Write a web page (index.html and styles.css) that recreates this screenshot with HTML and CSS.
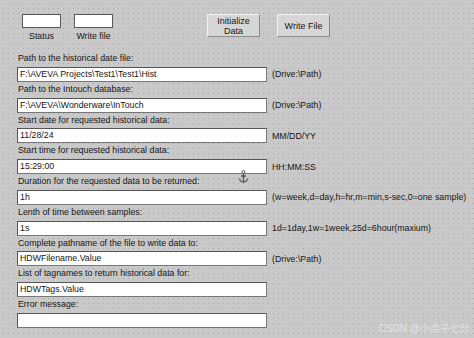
FILE: index.html
```html
<!DOCTYPE html>
<html lang="en">

<head>
    <meta charset="UTF-8">
    <meta name="viewport" content="width=device-width, initial-scale=1.0">
    <title>Historical Data</title>
    <link rel="stylesheet" href="styles.css">
</head>

<body>
    <!-- 顶部状态与按钮 -->
    <div class="top">
        <div class="flag">
            <div class="flag_box"></div>
            <span>Status</span>
        </div>
        <div class="flag">
            <div class="flag_box"></div>
            <span>Write file</span>
        </div>
        <button class="btn btn_init">Initialize<br>Data</button>
        <button class="btn">Write File</button>
    </div>
    <!-- 表单 -->
    <div class="form">
        <div class="label">Path to the historical date file:</div>
        <div class="row">
            <div class="field">F:\AVEVA Projects\Test1\Test1\Hist</div>
            <span class="hint">(Drive:\Path)</span>
        </div>
        <div class="label">Path to the Intouch database:</div>
        <div class="row">
            <div class="field">F:\AVEVA\Wonderware\InTouch</div>
            <span class="hint">(Drive:\Path)</span>
        </div>
        <div class="label">Start date for requested historical data:</div>
        <div class="row">
            <div class="field">11/28/24</div>
            <span class="hint">MM/DD/YY</span>
        </div>
        <div class="label">Start time for requested historical data:</div>
        <div class="row">
            <div class="field">15:29:00</div>
            <span class="hint">HH:MM:SS</span>
        </div>
        <div class="label">Duration for the requested data to be returned:</div>
        <div class="row">
            <div class="field">1h</div>
            <span class="hint">(w=week,d=day,h=hr,m=min,s-sec,0=one sample)</span>
        </div>
        <div class="label">Lenth of time between samples:</div>
        <div class="row">
            <div class="field">1s</div>
            <span class="hint">1d=1day,1w=1week,25d=6hour(maxium)</span>
        </div>
        <div class="label">Complete pathname of the file to write data to:</div>
        <div class="row">
            <div class="field">HDWFilename.Value</div>
            <span class="hint">(Drive:\Path)</span>
        </div>
        <div class="label">List of tagnames to return historical data for:</div>
        <div class="row">
            <div class="field">HDWTags.Value</div>
        </div>
        <div class="label">Error message:</div>
        <div class="row">
            <div class="field"></div>
        </div>
    </div>
    <!-- 光标 -->
    <svg class="cursor" width="11" height="13" viewBox="0 0 11 13">
        <circle cx="5.5" cy="2" r="1.5" fill="none" stroke="#555" stroke-width="1" />
        <path d="M5.5 3.5 V12 M3 6 H8 M1.5 8.5 Q2 12 5.5 12 Q9 12 9.5 8.5" fill="none" stroke="#555" stroke-width="1.3" />
    </svg>
    <div class="mark">CSDN @小点子七分</div>
</body>

</html>
```

FILE: styles.css
```css
* {
    margin: 0;
    padding: 0;
    box-sizing: border-box;
}

body {
    width: 474px;
    height: 338px;
    overflow: hidden;
    position: relative;
    font-family: "Liberation Sans", Arial, sans-serif;
    font-size: 8.8px;
    color: #161616;
    background-color: #c9c9c9;
    background-image: radial-gradient(circle, #a9a9a9 0.8px, transparent 1px);
    background-size: 5px 5px;
    background-position: 1px 1px;
}
/* 1 */

.top {
    display: flex;
    align-items: flex-start;
    padding: 14px 0 0 22px;
    height: 51px;
}

.flag {
    width: 39px;
    display: flex;
    flex-direction: column;
    align-items: center;
    margin-right: 13px;
}

.flag_box {
    width: 39px;
    height: 14px;
    background-color: #fff;
    border: 1px solid #5a5a5a;
}

.flag span {
    white-space: nowrap;
    line-height: 12px;
    margin-top: 2px;
}

.btn {
    width: 53px;
    height: 23px;
    font-family: inherit;
    font-size: 9px;
    line-height: 10px;
    color: #161616;
    background-color: #d6d6d6;
    border-top: 1px solid #f2f2f2;
    border-left: 1px solid #f2f2f2;
    border-right: 1px solid #8a8a8a;
    border-bottom: 1px solid #8a8a8a;
    margin-right: 17px;
}

.btn_init {
    margin-left: 81px;
}
/* 2 */

.form {
    padding-left: 17px;
}

.label {
    height: 15.75px;
    line-height: 15px;
    padding-left: 1px;
}

.row {
    display: flex;
    align-items: center;
    height: 15px;
}

.field {
    flex-shrink: 0;
    width: 250px;
    height: 15px;
    line-height: 13px;
    padding-left: 2px;
    background-color: #fff;
    border: 1px solid #555;
    border-right-color: #777;
    border-bottom-color: #777;
    white-space: nowrap;
}

.hint {
    margin-left: 5px;
    white-space: nowrap;
}
/* 3 */

.cursor {
    position: absolute;
    left: 238px;
    top: 170px;
}

.mark {
    position: absolute;
    right: 4px;
    bottom: 3px;
    font-family: "Liberation Sans", "Noto Sans CJK SC", sans-serif;
    font-size: 10px;
    color: #e2e2e2;
}
```
